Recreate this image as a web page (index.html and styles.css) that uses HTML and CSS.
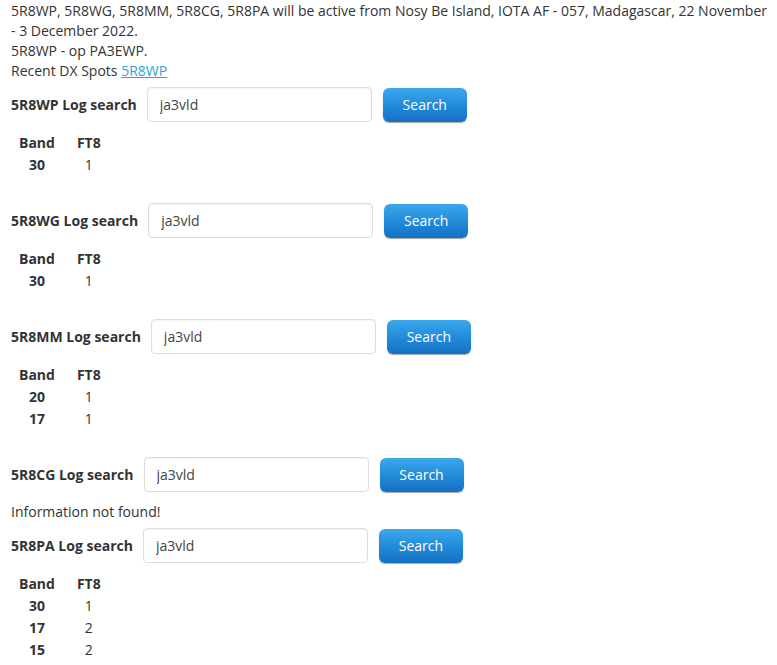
FILE: index.html
```html
<!DOCTYPE html>
<html lang="en">
  <head>
    <meta charset="UTF-8" />
    <title>5R8WP Log search</title>
    <link rel="stylesheet" href="styles.css">
  </head>
  <body>
    <!-- INTRO -->
    <div class="intro">
      <p>5R8WP, 5R8WG, 5R8MM, 5R8CG, 5R8PA will be active from Nosy Be Island, IOTA AF - 057, Madagascar, 22 November - 3 December 2022.</p>
      <p>5R8WP - op PA3EWP.</p>
      <p>Recent DX Spots <a href="#">5R8WP</a></p>
    </div>

    <!-- 5R8WP -->
    <form class="log-search">
      <label>5R8WP Log search</label>
      <input type="text" class="call-input" value="ja3vld" />
      <button type="button" class="search-btn">Search</button>
    </form>
    <table class="qso-table">
      <tr><th>Band</th><th>FT8</th></tr>
      <tr><th>30</th><td>1</td></tr>
    </table>

    <!-- 5R8WG -->
    <form class="log-search">
      <label>5R8WG Log search</label>
      <input type="text" class="call-input" value="ja3vld" />
      <button type="button" class="search-btn">Search</button>
    </form>
    <table class="qso-table">
      <tr><th>Band</th><th>FT8</th></tr>
      <tr><th>30</th><td>1</td></tr>
    </table>

    <!-- 5R8MM -->
    <form class="log-search">
      <label>5R8MM Log search</label>
      <input type="text" class="call-input" value="ja3vld" />
      <button type="button" class="search-btn">Search</button>
    </form>
    <table class="qso-table">
      <tr><th>Band</th><th>FT8</th></tr>
      <tr><th>20</th><td>1</td></tr>
      <tr><th>17</th><td>1</td></tr>
    </table>

    <!-- 5R8CG -->
    <form class="log-search">
      <label>5R8CG Log search</label>
      <input type="text" class="call-input" value="ja3vld" />
      <button type="button" class="search-btn">Search</button>
    </form>
    <p class="not-found">Information not found!</p>

    <!-- 5R8PA -->
    <form class="log-search">
      <label>5R8PA Log search</label>
      <input type="text" class="call-input" value="ja3vld" />
      <button type="button" class="search-btn">Search</button>
    </form>
    <table class="qso-table">
      <tr><th>Band</th><th>FT8</th></tr>
      <tr><th>30</th><td>1</td></tr>
      <tr><th>17</th><td>2</td></tr>
      <tr><th>15</th><td>2</td></tr>
    </table>
  </body>
</html>
```

FILE: styles.css
```css
/* Global */
* {
  box-sizing: border-box;
}
body {
  margin: 0;
  padding: 1px 8px 1px 11px;
  font-family: "Open Sans", sans-serif;
  font-size: 14px;
  line-height: 20px;
  color: #333;
  background: #fff;
}
p {
  margin: 0;
}
a {
  color: #2fa4d9;
}

/* Intro text */
.intro {
  margin-bottom: 6px;
}

/* Search form */
.log-search {
  display: flex;
  align-items: center;
  margin: 0 0 10px;
}
.log-search label {
  font-weight: bold;
  margin-right: 10px;
}
.call-input {
  width: 225px;
  height: 35px;
  padding: 0 12px;
  border: 1px solid #ddd;
  border-radius: 4px;
  box-shadow: inset 0 1px 2px rgba(0, 0, 0, 0.06);
  font-family: inherit;
  font-size: 14px;
  color: #444;
  outline: none;
}
.search-btn {
  width: 84px;
  height: 34px;
  margin-left: 11px;
  border: none;
  border-radius: 6px;
  background: linear-gradient(to bottom, #3ca8ec 0%, #2189d8 55%, #1570c3 100%);
  box-shadow: 0 1px 1px rgba(0, 0, 0, 0.35);
  font-family: inherit;
  font-size: 14px;
  color: #fff;
  cursor: pointer;
}

/* Result tables */
.qso-table {
  border-collapse: collapse;
  margin: 0 0 27px -3px;
}
.qso-table th,
.qso-table td {
  padding: 1px 11px;
  text-align: center;
}
.qso-table td {
  font-weight: normal;
}

.not-found {
  margin: 0 0 6px;
}
```
